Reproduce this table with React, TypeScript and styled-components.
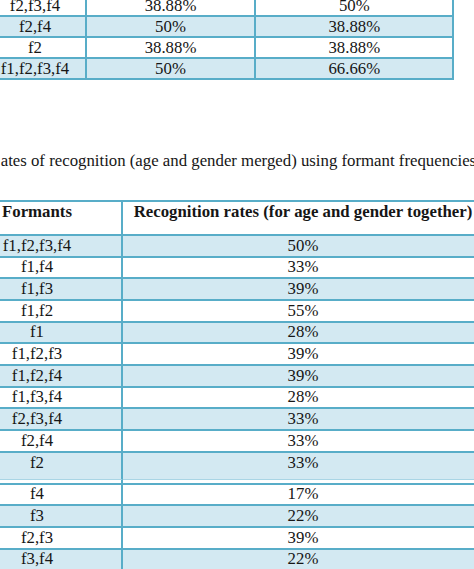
import React from "react";
import styled, { createGlobalStyle } from "styled-components";

const LINE = "#58adc8";
const SOFT_LINE = "#a9d5e5";
const FILL = "#d3e9f2";

const GlobalStyle = createGlobalStyle`
  html, body {
    margin: 0;
    padding: 0;
    background: #ffffff;
    overflow: hidden;
  }
  body {
    font-family: "Liberation Serif", "Times New Roman", serif;
    color: #161616;
  }
`;

const Page = styled.main`
  display: block;
  width: 474px;
  height: 569px;
  overflow: hidden;
`;

const BaseTable = styled.table`
  border-collapse: separate;
  border-spacing: 0;
  table-layout: fixed;
  box-sizing: border-box;
  border-top: 2px solid ${LINE};
  border-left: 2px solid ${LINE};
  font-family: "Liberation Serif", "Times New Roman", serif;
  font-size: 16.8px;
  line-height: 18px;
`;

// the upper table is cut off by the top edge of the picture
const ScoreTable = styled(BaseTable)`
  width: 471px;
  margin: -5.6px 0 0 -16.7px;

  td:nth-child(1) { width: 101.4px; }
  td:nth-child(2) { width: 169.6px; }
`;

const MergedTable = styled(BaseTable)`
  width: 534px;
  margin: 29.3px 0 0 -49px;

  td:nth-child(1), th:nth-child(1) { width: 170px; }
`;

const Row = styled.tr<{ $shade?: boolean; $h: number; $soft?: boolean }>`
  background: ${(p) => (p.$shade ? FILL : "#ffffff")};

  & > td,
  & > th {
    height: ${(p) => p.$h}px;
    border-bottom: ${(p) => (p.$soft ? `1px solid ${SOFT_LINE}` : `2px solid ${LINE}`)};
  }
`;

const Cell = styled.td`
  box-sizing: border-box;
  padding: 0.8px 0 0;
  text-align: center;
  vertical-align: top;
  line-height: 18px;
  white-space: nowrap;
  border-right: 2px solid ${LINE};
`;

const HeadCell = styled.th`
  box-sizing: border-box;
  padding: 0.8px 0 0;
  text-align: center;
  vertical-align: top;
  line-height: 18px;
  white-space: nowrap;
  font-weight: 700;
  border-right: 2px solid ${LINE};
`;

const GapRow = styled.tr`
  background: #ffffff;

  & > td {
    box-sizing: border-box;
    height: 4.5px;
    padding: 0;
    font-size: 0;
    line-height: 0;
    border-right: 2px solid ${LINE};
    border-bottom: 2px solid ${LINE};
  }
`;

const Caption = styled.p`
  margin: 71.2px 0 0 0.7px;
  font-size: 16.8px;
  line-height: 20px;
  white-space: nowrap;
`;

const scores = [
  ["f2,f3,f4", "38.88%", "50%"],
  ["f2,f4", "50%", "38.88%"],
  ["f2", "38.88%", "38.88%"],
  ["f1,f2,f3,f4", "50%", "66.66%"],
];

const merged = [
  ["f1,f2,f3,f4", "50%"],
  ["f1,f4", "33%"],
  ["f1,f3", "39%"],
  ["f1,f2", "55%"],
  ["f1", "28%"],
  ["f1,f2,f3", "39%"],
  ["f1,f2,f4", "39%"],
  ["f1,f3,f4", "28%"],
  ["f2,f3,f4", "33%"],
  ["f2,f4", "33%"],
];

const single = [
  ["f4", "17%"],
  ["f3", "22%"],
  ["f2,f3", "39%"],
  ["f3,f4", "22%"],
];

const App: React.FC = () => {
  return (
    <>
      <GlobalStyle />
      <Page>
        <ScoreTable>
          <tbody>
            {scores.map((r, i) => (
              <Row key={r[0]} $h={20.9} $shade={i % 2 === 1}>
                <Cell>{r[0]}</Cell>
                <Cell>{r[1]}</Cell>
                <Cell>{r[2]}</Cell>
              </Row>
            ))}
          </tbody>
        </ScoreTable>

        <Caption>ates of recognition (age and gender merged) using formant frequencies</Caption>

        <MergedTable>
          <thead>
            <Row $h={33.4}>
              <HeadCell>Formants</HeadCell>
              <HeadCell>Recognition rates (for age and gender together)</HeadCell>
            </Row>
          </thead>
          <tbody>
            {merged.map((r, i) => (
              <Row key={r[0]} $h={21.7} $shade={i % 2 === 0}>
                <Cell>{r[0]}</Cell>
                <Cell>{r[1]}</Cell>
              </Row>
            ))}
            <Row $h={27.4} $shade $soft>
              <Cell>f2</Cell>
              <Cell>33%</Cell>
            </Row>
            <GapRow>
              <td />
              <td />
            </GapRow>
            {single.map((r, i) => (
              <Row key={r[0]} $h={21.7} $shade={i % 2 === 1}>
                <Cell>{r[0]}</Cell>
                <Cell>{r[1]}</Cell>
              </Row>
            ))}
          </tbody>
        </MergedTable>
      </Page>
    </>
  );
};

export default App;
